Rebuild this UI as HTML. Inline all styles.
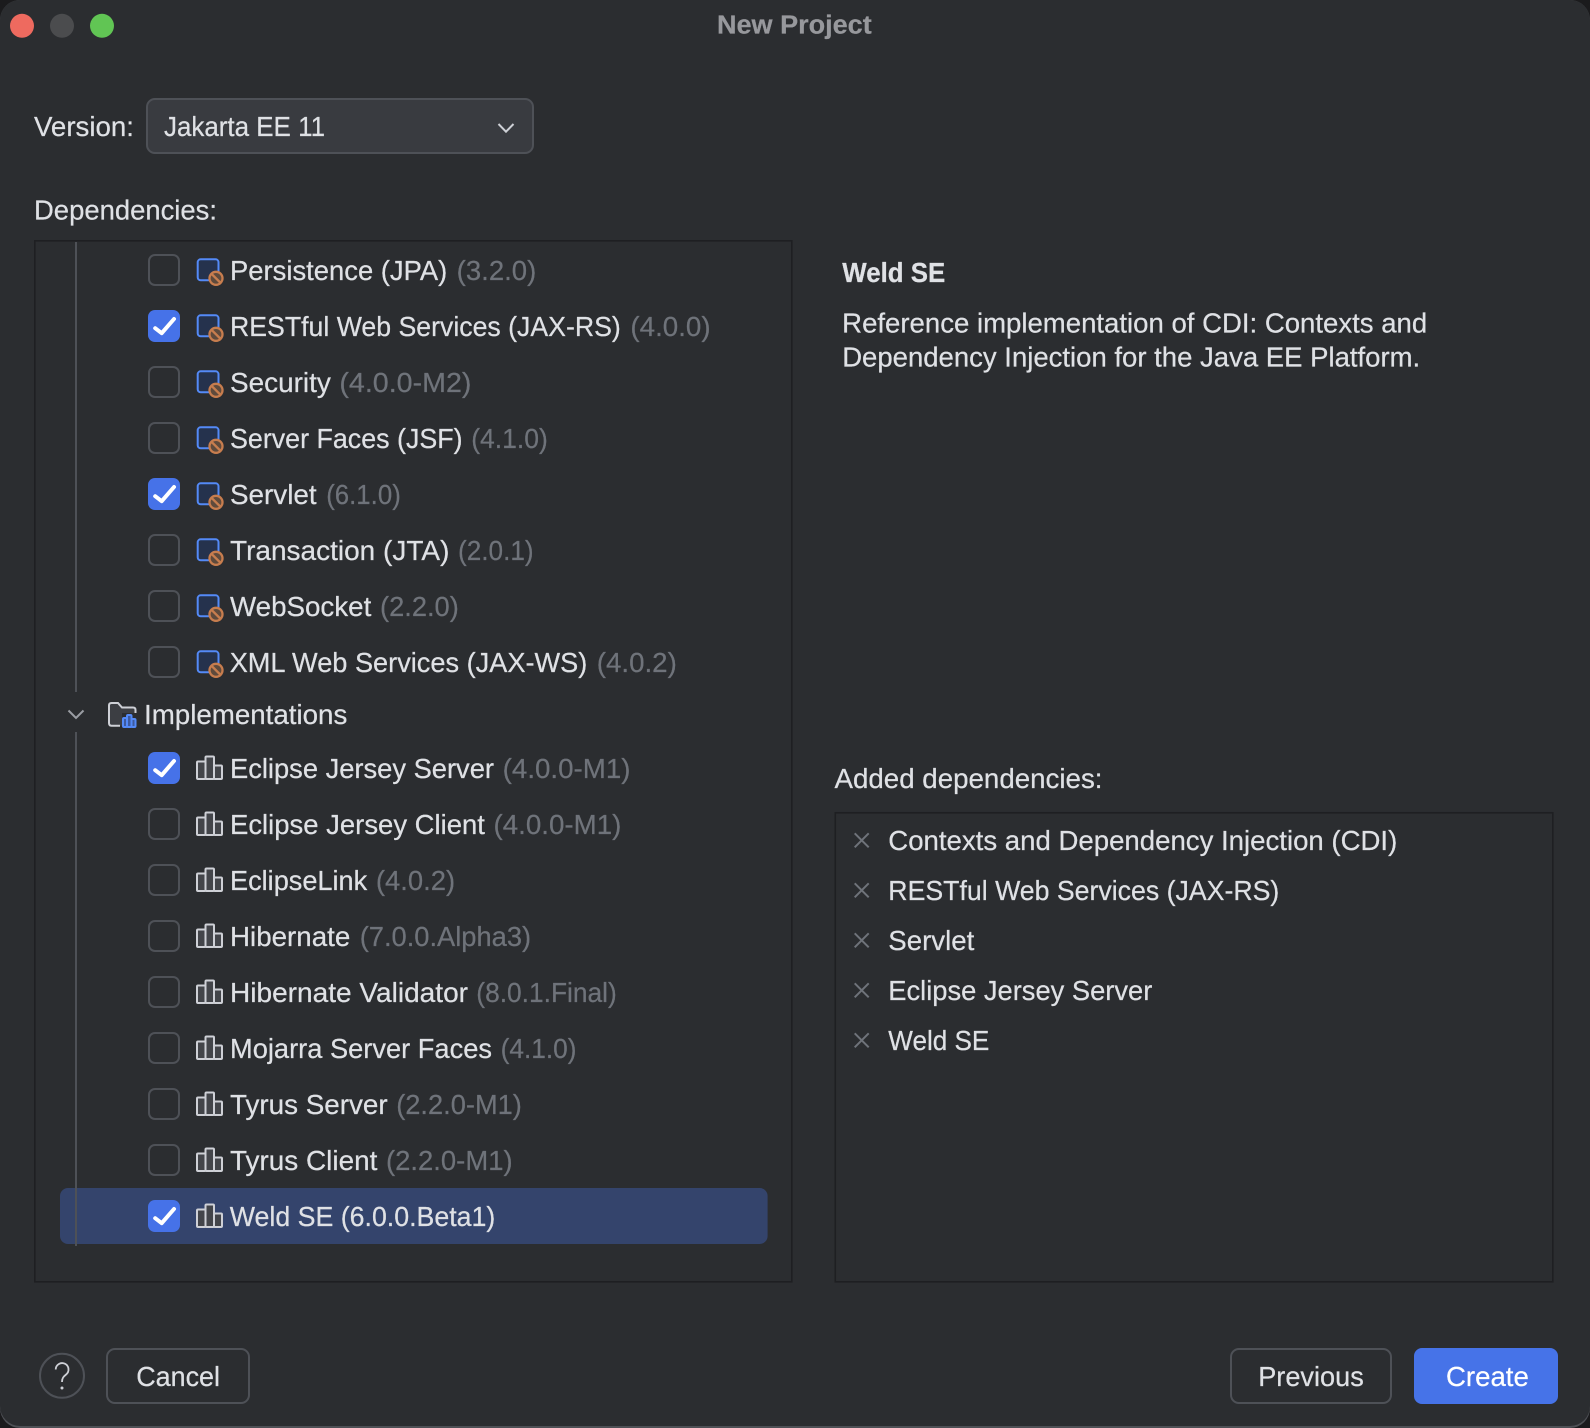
<!DOCTYPE html>
<html lang="en">
<head>
<meta charset="utf-8">
<title>New Project</title>
<style>
html,body{margin:0;padding:0;background:#1b1b1d;width:1590px;height:1428px;overflow:hidden}
svg{display:block}
text{font-family:"Liberation Sans",sans-serif;font-size:27.5px;fill:#dfe1e5;stroke:#dfe1e5;stroke-width:.22px}
.v{fill:#6f737a;stroke:#6f737a}
.b{font-weight:bold}
</style>
</head>
<body>
<svg xmlns="http://www.w3.org/2000/svg" width="1590" height="1428" viewBox="0 0 1590 1428">
<defs>
<g id="un"><rect x="149" y="-15" width="30" height="30" rx="6" fill="none" stroke="#4e5157" stroke-width="2"/></g>
<g id="ck"><rect x="148" y="-16" width="32" height="32" rx="7" fill="#4672e8"/><path d="M155.2 2.2L161.7 7.2L174 -7" fill="none" stroke="#fff" stroke-width="4" stroke-linecap="round" stroke-linejoin="round"/></g>
<g id="j"><rect x="197.7" y="-10.7" width="20.8" height="21" rx="3" fill="#25324d" stroke="#548af7" stroke-width="2"/><circle cx="216" cy="8.3" r="6.5" fill="#5e4a3c" stroke="#c77d4e" stroke-width="2.3"/><path d="M211.5 3.8L220.5 12.8" stroke="#c77d4e" stroke-width="2.4"/></g>
<g id="l" fill="#43454a" stroke="#ced0d6" stroke-width="2" stroke-linejoin="round"><rect x="197" y="-6.5" width="8.5" height="17.5" rx="1"/><rect x="205.5" y="-11.5" width="8.5" height="22.5" rx="1"/><rect x="214" y="-2.5" width="8" height="13.5" rx="1"/></g>
<path id="x" d="M-7 -7L7 7M7 -7L-7 7" fill="none" stroke="#6f737a" stroke-width="2"/>
</defs>

<rect x="0" y="0" width="1590" height="1428" rx="20" fill="#4e5055"/>
<path d="M20 0H1570A20 20 0 0 1 1590 20V1406A20 20 0 0 1 1570 1426H20A20 20 0 0 1 0 1406V20A20 20 0 0 1 20 0Z" fill="#2b2d30"/>

<circle cx="22" cy="25.8" r="12" fill="#ee6a5f"/>
<circle cx="62" cy="25.8" r="12" fill="#4b4c4e"/>
<circle cx="102" cy="25.8" r="12" fill="#61c554"/>
<text class="b" x="717" y="33.5" textLength="154.7" lengthAdjust="spacingAndGlyphs" style="font-size:25.5px;fill:#97989c;stroke:#97989c">New Project</text>

<text x="34" y="136" textLength="100" lengthAdjust="spacingAndGlyphs">Version:</text>
<rect x="147" y="99" width="386" height="54" rx="8" fill="#393b40" stroke="#4e5157" stroke-width="2"/>
<text x="164" y="136" textLength="161" lengthAdjust="spacingAndGlyphs">Jakarta EE 11</text>
<path d="M498.5 124L506 131.7L513.5 124" fill="none" stroke="#ced0d6" stroke-width="2"/>

<text x="34" y="219.5" textLength="183" lengthAdjust="spacingAndGlyphs">Dependencies:</text>

<rect x="34.8" y="240.8" width="757" height="1041" fill="none" stroke="#1e1f22" stroke-width="1.6"/>

<rect x="60" y="1188" width="707.6" height="56" rx="8" fill="#34446c"/>
<rect x="75" y="242" width="2" height="450" fill="#4e5157"/>
<rect x="75" y="732" width="2" height="514" fill="#4e5157"/>

<!-- rows -->
<use href="#un" y="270"/><use href="#j" y="270"/>
<text x="230" y="280" textLength="217.3" lengthAdjust="spacingAndGlyphs">Persistence (JPA)</text>
<text class="v" x="456.7" y="280" textLength="79.6" lengthAdjust="spacingAndGlyphs">(3.2.0)</text>

<use href="#ck" y="326"/><use href="#j" y="326"/>
<text x="230" y="336" textLength="390.8" lengthAdjust="spacingAndGlyphs">RESTful Web Services (JAX-RS)</text>
<text class="v" x="630.4" y="336" textLength="80.2" lengthAdjust="spacingAndGlyphs">(4.0.0)</text>

<use href="#un" y="382"/><use href="#j" y="382"/>
<text x="230" y="392" textLength="100.8" lengthAdjust="spacingAndGlyphs">Security</text>
<text class="v" x="339.4" y="392" textLength="132" lengthAdjust="spacingAndGlyphs">(4.0.0-M2)</text>

<use href="#un" y="438"/><use href="#j" y="438"/>
<text x="230" y="448" textLength="232.6" lengthAdjust="spacingAndGlyphs">Server Faces (JSF)</text>
<text class="v" x="471.2" y="448" textLength="76.6" lengthAdjust="spacingAndGlyphs">(4.1.0)</text>

<use href="#ck" y="494"/><use href="#j" y="494"/>
<text x="230" y="504" textLength="86.6" lengthAdjust="spacingAndGlyphs">Servlet</text>
<text class="v" x="326.2" y="504" textLength="74.6" lengthAdjust="spacingAndGlyphs">(6.1.0)</text>

<use href="#un" y="550"/><use href="#j" y="550"/>
<text x="230" y="560" textLength="219.4" lengthAdjust="spacingAndGlyphs">Transaction (JTA)</text>
<text class="v" x="458" y="560" textLength="75.6" lengthAdjust="spacingAndGlyphs">(2.0.1)</text>

<use href="#un" y="606"/><use href="#j" y="606"/>
<text x="230" y="616" textLength="141.3" lengthAdjust="spacingAndGlyphs">WebSocket</text>
<text class="v" x="380" y="616" textLength="78.8" lengthAdjust="spacingAndGlyphs">(2.2.0)</text>

<use href="#un" y="662"/><use href="#j" y="662"/>
<text x="229.7" y="672" textLength="357.6" lengthAdjust="spacingAndGlyphs">XML Web Services (JAX-WS)</text>
<text class="v" x="596.8" y="672" textLength="80" lengthAdjust="spacingAndGlyphs">(4.0.2)</text>

<!-- Implementations -->
<path d="M68.5 710.5L76 718L83.5 710.5" fill="none" stroke="#9a9da3" stroke-width="2"/>
<path d="M120 725.7H111.5Q109 725.7 109 723V705.5Q109 703 111.5 703H118L122 707.5H133Q135.5 707.5 135.5 710V713H122V725.7Z" fill="#3c3e43"/>
<path d="M120 725.7H111.5Q109 725.7 109 723V705.5Q109 703 111.5 703H118L122 707.5H133Q135.5 707.5 135.5 710V713" fill="none" stroke="#ced0d6" stroke-width="2"/>
<g fill="#3d5a9e" stroke="#548af7" stroke-width="2" stroke-linejoin="round"><rect x="123" y="718" width="4" height="9" rx="1"/><rect x="127" y="715" width="4.5" height="12" rx="1"/><rect x="131.5" y="719" width="4" height="8" rx="1"/></g>
<text x="144" y="724" textLength="203.3" lengthAdjust="spacingAndGlyphs">Implementations</text>

<use href="#ck" y="768"/><use href="#l" y="768"/>
<text x="230" y="778" textLength="264" lengthAdjust="spacingAndGlyphs">Eclipse Jersey Server</text>
<text class="v" x="502.7" y="778" textLength="127.8" lengthAdjust="spacingAndGlyphs">(4.0.0-M1)</text>

<use href="#un" y="824"/><use href="#l" y="824"/>
<text x="230" y="834" textLength="254.9" lengthAdjust="spacingAndGlyphs">Eclipse Jersey Client</text>
<text class="v" x="493.5" y="834" textLength="127.9" lengthAdjust="spacingAndGlyphs">(4.0.0-M1)</text>

<use href="#un" y="880"/><use href="#l" y="880"/>
<text x="230" y="890" textLength="137.2" lengthAdjust="spacingAndGlyphs">EclipseLink</text>
<text class="v" x="375.9" y="890" textLength="79.2" lengthAdjust="spacingAndGlyphs">(4.0.2)</text>

<use href="#un" y="936"/><use href="#l" y="936"/>
<text x="230" y="946" textLength="120.3" lengthAdjust="spacingAndGlyphs">Hibernate</text>
<text class="v" x="359.7" y="946" textLength="171.4" lengthAdjust="spacingAndGlyphs">(7.0.0.Alpha3)</text>

<use href="#un" y="992"/><use href="#l" y="992"/>
<text x="230" y="1002" textLength="238" lengthAdjust="spacingAndGlyphs">Hibernate Validator</text>
<text class="v" x="476.3" y="1002" textLength="140.5" lengthAdjust="spacingAndGlyphs">(8.0.1.Final)</text>

<use href="#un" y="1048"/><use href="#l" y="1048"/>
<text x="230" y="1058" textLength="262" lengthAdjust="spacingAndGlyphs">Mojarra Server Faces</text>
<text class="v" x="500.6" y="1058" textLength="75.9" lengthAdjust="spacingAndGlyphs">(4.1.0)</text>

<use href="#un" y="1104"/><use href="#l" y="1104"/>
<text x="230" y="1114" textLength="157.6" lengthAdjust="spacingAndGlyphs">Tyrus Server</text>
<text class="v" x="396.2" y="1114" textLength="125.7" lengthAdjust="spacingAndGlyphs">(2.2.0-M1)</text>

<use href="#un" y="1160"/><use href="#l" y="1160"/>
<text x="230" y="1170" textLength="147.4" lengthAdjust="spacingAndGlyphs">Tyrus Client</text>
<text class="v" x="386" y="1170" textLength="126.6" lengthAdjust="spacingAndGlyphs">(2.2.0-M1)</text>

<use href="#ck" y="1216"/><use href="#l" y="1216"/>
<text x="229.8" y="1226" textLength="265.5" lengthAdjust="spacingAndGlyphs">Weld SE (6.0.0.Beta1)</text>

<!-- right pane -->
<text class="b" x="842.3" y="282" textLength="103" lengthAdjust="spacingAndGlyphs">Weld SE</text>
<text x="842.2" y="332.5" textLength="585" lengthAdjust="spacingAndGlyphs">Reference implementation of CDI: Contexts and</text>
<text x="842.2" y="366.5" textLength="578" lengthAdjust="spacingAndGlyphs">Dependency Injection for the Java EE Platform.</text>

<text x="834.5" y="788" textLength="268" lengthAdjust="spacingAndGlyphs">Added dependencies:</text>
<rect x="835.3" y="812.8" width="717.5" height="469" fill="none" stroke="#1e1f22" stroke-width="1.6"/>

<use href="#x" x="861.7" y="840.3"/>
<text x="888.3" y="850" textLength="509" lengthAdjust="spacingAndGlyphs">Contexts and Dependency Injection (CDI)</text>
<use href="#x" x="861.7" y="890.3"/>
<text x="888.3" y="900" textLength="391" lengthAdjust="spacingAndGlyphs">RESTful Web Services (JAX-RS)</text>
<use href="#x" x="861.7" y="940.3"/>
<text x="888.3" y="950" textLength="86" lengthAdjust="spacingAndGlyphs">Servlet</text>
<use href="#x" x="861.7" y="990.3"/>
<text x="888.3" y="1000" textLength="264" lengthAdjust="spacingAndGlyphs">Eclipse Jersey Server</text>
<use href="#x" x="861.7" y="1040.3"/>
<text x="888.3" y="1050" textLength="101" lengthAdjust="spacingAndGlyphs">Weld SE</text>

<!-- footer -->
<circle cx="62" cy="1375.8" r="22" fill="none" stroke="#4e5157" stroke-width="2"/>
<path d="M55.7 1369.5a6.4 6.4 0 1 1 10.4 5c-2.6 2.1-4.1 3.6-4.1 7.5" fill="none" stroke="#ced0d6" stroke-width="1.8"/>
<circle cx="62" cy="1388" r="1.5" fill="#ced0d6"/>

<rect x="107" y="1349" width="142" height="54" rx="8" fill="none" stroke="#4e5157" stroke-width="2"/>
<text x="136.2" y="1386" textLength="83.8" lengthAdjust="spacingAndGlyphs">Cancel</text>

<rect x="1231" y="1349" width="160" height="54" rx="8" fill="none" stroke="#4e5157" stroke-width="2"/>
<text x="1258.2" y="1386" textLength="105.6" lengthAdjust="spacingAndGlyphs">Previous</text>

<rect x="1414" y="1348" width="144" height="56" rx="8" fill="#4673e8"/>
<text x="1446" y="1386" textLength="82.8" lengthAdjust="spacingAndGlyphs" style="fill:#fff;stroke:#fff">Create</text>
</svg>
</body>
</html>
